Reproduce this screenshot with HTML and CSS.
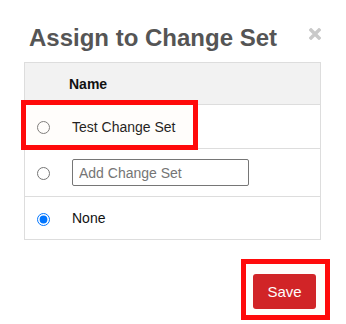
FILE: index.html
```html
<!DOCTYPE html>
<html>
<head>
<meta charset="utf-8">
<link rel="stylesheet" href="styles.css">
</head>
<body>
<div class="modal">
  <div class="modal-header">
    <h1 class="title">Assign to Change Set</h1>
    <button class="close" aria-label="Close">
      <svg width="12" height="12" viewBox="0 0 12 12"><path d="M2 2L10 10M10 2L2 10" stroke="#c9c9c9" stroke-width="3.4" stroke-linecap="square"/></svg>
    </button>
  </div>
  <table class="sets">
    <thead>
      <tr><th class="col-radio"></th><th class="col-name">Name</th></tr>
    </thead>
    <tbody>
      <tr class="row row-1"><td class="col-radio"><input type="radio" name="cs"></td><td class="col-name">Test Change Set</td></tr>
      <tr class="row row-2"><td class="col-radio"><input type="radio" name="cs"></td><td class="col-name"><input class="new-set" type="text" placeholder="Add Change Set"></td></tr>
      <tr class="row row-3"><td class="col-radio"><input type="radio" name="cs" checked></td><td class="col-name">None</td></tr>
    </tbody>
  </table>
  <div class="footer">
    <button class="save">Save</button>
  </div>
  <div class="mark mark-row"></div>
  <div class="mark mark-save"></div>
</div>
</body>
</html>
```
FILE: styles.css
```css
html, body {
  margin: 0;
  padding: 0;
  background: #fff;
}
body {
  font-family: "Liberation Sans", Arial, sans-serif;
  width: 346px;
  height: 324px;
  overflow: hidden;
}
.modal {
  position: relative;
  padding: 24px 25px 0 24px;
}
.modal-header {
  display: flex;
  align-items: flex-start;
  justify-content: space-between;
  height: 28px;
}
.title {
  margin: 0 0 0 5px;
  font-size: 24px;
  line-height: 28px;
  font-weight: bold;
  color: #555;
}
.close {
  border: 0;
  background: none;
  padding: 0;
  margin: 4px 0 0 0;
  width: 12px;
  height: 12px;
  display: block;
}
.close svg { display: block; }
.sets {
  margin-top: 10px;
  width: 297px;
  border-collapse: collapse;
  border: 1px solid #ddd;
  font-size: 14px;
  color: #111;
}
.sets th, .sets td {
  padding: 0;
  border-top: 1px solid #ddd;
}
.sets thead tr {
  background: #f2f2f2;
  height: 42px;
}
.sets th {
  text-align: left;
  font-weight: bold;
  color: #111;
}
.sets th.col-name { padding-left: 7px; }
.col-radio {
  width: 37px;
  text-align: center;
}
.col-radio input {
  margin: 0;
  vertical-align: middle;
  width: 13px;
  height: 13px;
}
td.col-name { padding-left: 10px; }
.row-1 { height: 44px; }
.row-2 { height: 48px; }
.row-3 { height: 43px; }
.new-set {
  box-sizing: border-box;
  width: 177px;
  height: 27px;
  margin: 0;
  border: 1px solid #767676;
  border-radius: 2px;
  padding: 0 6px;
  font-family: "Liberation Sans", Arial, sans-serif;
  font-size: 14px;
  vertical-align: middle;
}
.new-set::placeholder { color: #757575; }
.footer {
  display: flex;
  justify-content: flex-end;
  margin-top: 34px;
  padding-right: 5px;
}
.save {
  width: 63px;
  height: 35px;
  border: 0;
  border-radius: 3px;
  background: #ce1419;
  color: #fff;
  font-family: "Liberation Sans", Arial, sans-serif;
  font-size: 15px;
  padding: 0;
}
.mark {
  position: absolute;
  box-sizing: border-box;
  border: 5px solid #ff0a0a;
  background: rgba(250, 225, 210, 0.08);
}
.mark-row {
  left: 21px;
  top: 100px;
  width: 177px;
  height: 50px;
}
.mark-save {
  left: 241px;
  top: 259px;
  width: 89px;
  height: 61px;
}
```
